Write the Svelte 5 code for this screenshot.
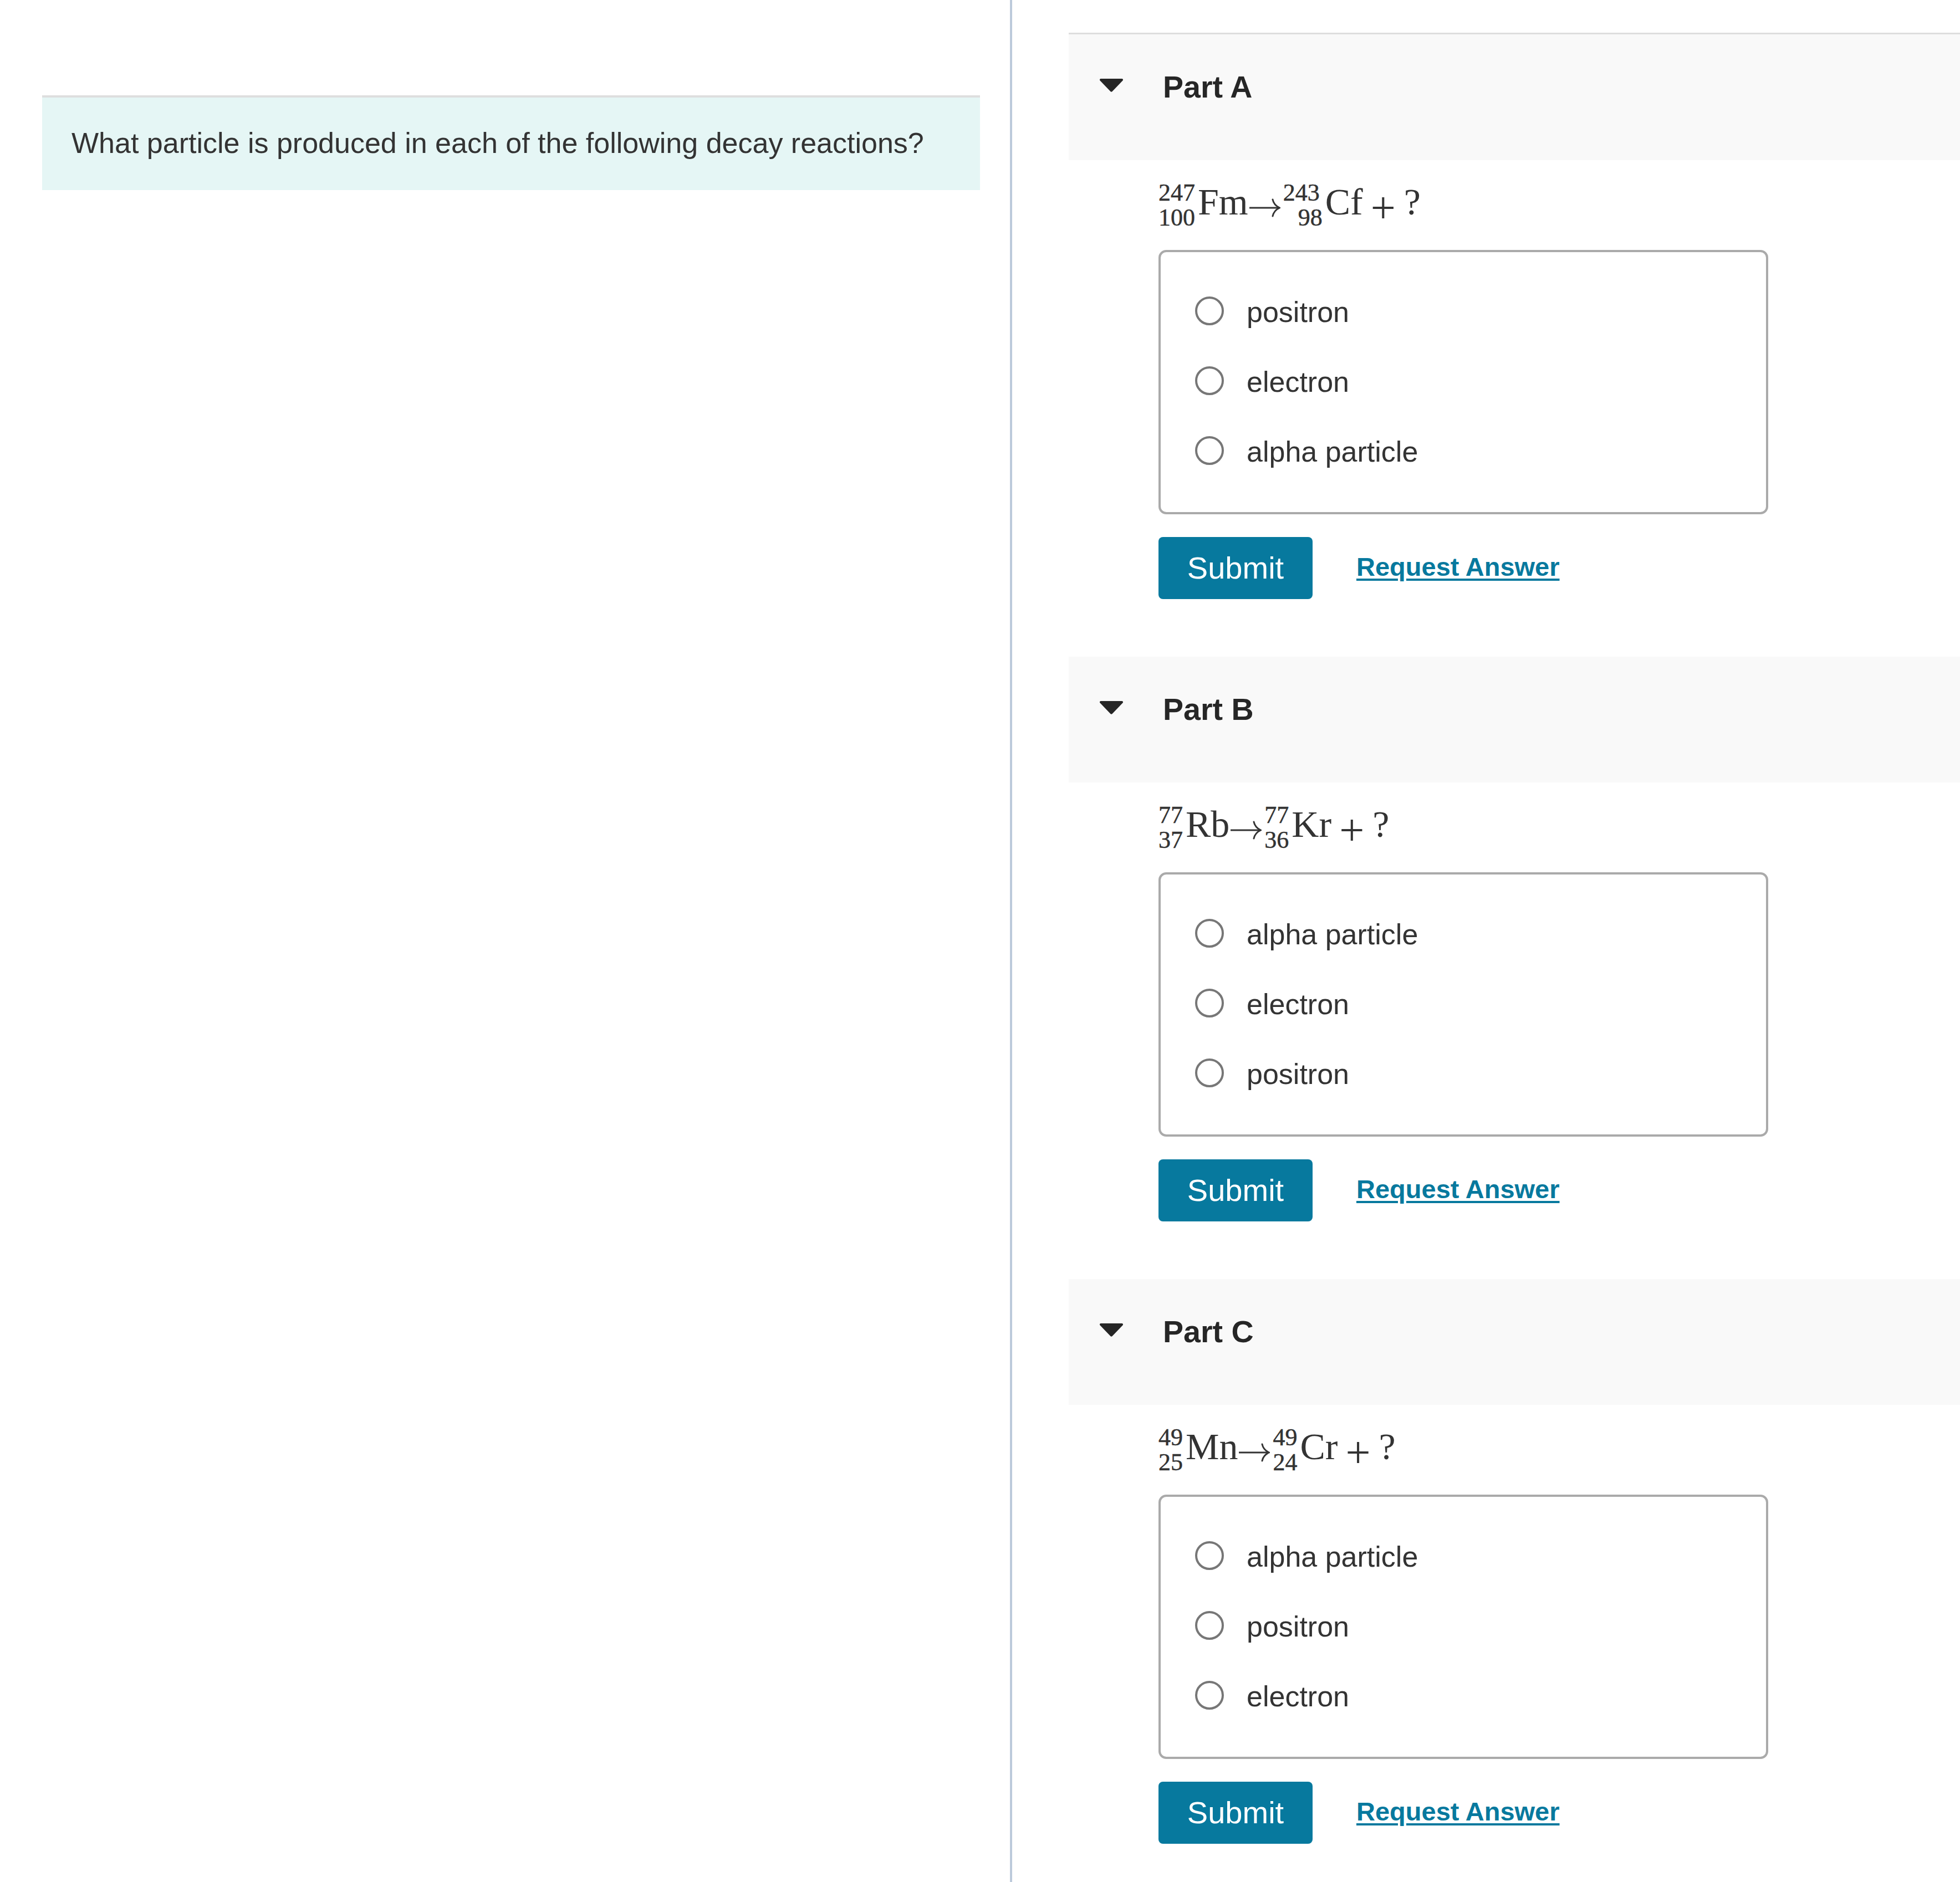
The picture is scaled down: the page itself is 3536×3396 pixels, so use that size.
<script>
  const parts = [
    {
      name: 'Part A',
      left: { mass: 247, atomic: 100, symbol: 'Fm' },
      right: { mass: 243, atomic: 98, symbol: 'Cf' },
      options: ['positron', 'electron', 'alpha particle']
    },
    {
      name: 'Part B',
      left: { mass: 77, atomic: 37, symbol: 'Rb' },
      right: { mass: 77, atomic: 36, symbol: 'Kr' },
      options: ['alpha particle', 'electron', 'positron']
    },
    {
      name: 'Part C',
      left: { mass: 49, atomic: 25, symbol: 'Mn' },
      right: { mass: 49, atomic: 24, symbol: 'Cr' },
      options: ['alpha particle', 'positron', 'electron']
    }
  ];

  const digits = (value) => String(value).length;
</script>

{#snippet nuclide(item)}
  <span class="scripts">
    <span class:inset={digits(item.atomic) < digits(item.mass)}>{item.mass}</span>
    <span>{item.atomic}</span>
  </span>
  <span class="symbol">{item.symbol}</span>
{/snippet}

<div class="page">
  <div class="intro-pane">
    <p class="intro">What particle is produced in each of the following decay reactions?</p>
  </div>

  <div class="parts-pane">
    {#each parts as part, index}
      <section class="part">
        <header class="part-header" class:first={index === 0}>
          <svg class="caret" viewBox="0 0 42 24" aria-hidden="true">
            <path d="M2 0h38a2 2 0 0 1 1.6 3.2L22.6 23a2 2 0 0 1-3.2 0L.4 3.2A2 2 0 0 1 2 0z" />
          </svg>
          <h2>{part.name}</h2>
        </header>

        <div class="part-body">
          <div class="formula">
            {@render nuclide(part.left)}
            <svg class="arrow" viewBox="0 0 56 34" aria-label="yields">
              <path d="M0 17h53" />
              <path d="M42 2c1.500 7 6 12 12.500 15C48 20 43.500 25 42 32" />
            </svg>
            {@render nuclide(part.right)}
            <span class="plus">+</span>
            <span class="unknown">?</span>
          </div>

          <div class="choices">
            {#each part.options as option}
              <label class="choice">
                <input type="radio" name={part.name} />
                <span>{option}</span>
              </label>
            {/each}
          </div>

          <div class="actions">
            <button type="button" class="submit">Submit</button>
            <a class="request" href="#answer">Request Answer</a>
          </div>
        </div>
      </section>
    {/each}
  </div>
</div>

<style>
  :global(body) {
    margin: 0;
    background: #fff;
  }

  .page {
    display: flex;
    width: 3536px;
    height: 3396px;
    overflow: hidden;
    font-family: "Liberation Sans", Arial, sans-serif;
    color: #333;
  }

  .intro-pane {
    box-sizing: border-box;
    width: 1826px;
    flex: none;
    padding: 172px 54px 0 76px;
    border-right: 4px solid #bccadb;
  }

  .intro {
    box-sizing: border-box;
    height: 171px;
    margin: 0;
    padding: 52px 0 0 53px;
    border-top: 4px solid #dedede;
    background: #e5f6f5;
    font-size: 52px;
    line-height: 60px;
  }

  .parts-pane {
    flex: 1;
    min-width: 0;
    padding: 59px 0 0 102px;
  }

  .part {
    height: 1123px;
  }

  .part-header {
    box-sizing: border-box;
    display: flex;
    align-items: flex-start;
    height: 230px;
    padding: 65px 0 0 56px;
    border-top: 3px solid transparent;
    background: #f9f9f9;
    background-clip: padding-box;
  }

  .part-header.first {
    border-top-color: #dedede;
  }

  .caret {
    width: 42px;
    height: 24px;
    margin-top: 15px;
    fill: #262626;
  }

  h2 {
    margin: 0 0 0 72px;
    font-size: 55.5px;
    line-height: 60px;
    font-weight: 700;
    color: #262626;
  }

  .part-body {
    padding: 31px 0 0 162px;
  }

  .formula {
    display: flex;
    align-items: flex-start;
    height: 131px;
    font-family: "Liberation Serif", "Times New Roman", serif;
    font-size: 68px;
    line-height: 88px;
    color: #333;
  }

  .scripts {
    display: flex;
    flex-direction: column;
    align-items: flex-end;
    margin-top: 5px;
    font-size: 44px;
    line-height: 45px;
    -webkit-text-stroke: 0.5px #333;
  }

  .inset {
    padding-right: 5px;
  }

  .symbol {
    margin: 0 2px 0 5px;
  }

  .arrow {
    width: 56px;
    height: 34px;
    margin: 38px 5px 0 0;
    fill: none;
    stroke: #333;
    stroke-width: 3;
    stroke-linecap: round;
  }

  .plus {
    margin: 11px 0 0 12px;
    font-size: 80px;
  }

  .unknown {
    margin-left: 15px;
  }

  .choices {
    box-sizing: border-box;
    display: flex;
    flex-direction: column;
    width: 1100px;
    height: 477px;
    padding: 43px 0 48px 62px;
    border: 4px solid #aaa;
    border-radius: 14px;
  }

  .choice {
    display: flex;
    align-items: center;
    height: 126px;
    font-size: 52px;
    line-height: 60px;
    color: #333;
  }

  .choice input {
    box-sizing: border-box;
    appearance: none;
    width: 52px;
    height: 52px;
    margin: 0 41px 0 0;
    border: 4px solid #777;
    border-radius: 50%;
    background: #fff;
  }

  .choice span {
    padding-top: 4px;
  }

  .actions {
    display: flex;
    align-items: center;
    margin-top: 41px;
  }

  .submit {
    width: 278px;
    height: 112px;
    padding: 0;
    border: 0;
    border-radius: 8px;
    background: #07799e;
    color: #fff;
    font-family: inherit;
    font-size: 56px;
    line-height: 62px;
  }

  .request {
    margin: 0 0 4px 79px;
    color: #07799e;
    font-size: 47px;
    line-height: 52px;
    font-weight: 700;
    text-decoration: underline;
    text-decoration-thickness: 4px;
    text-underline-offset: 5px;
  }
</style>
